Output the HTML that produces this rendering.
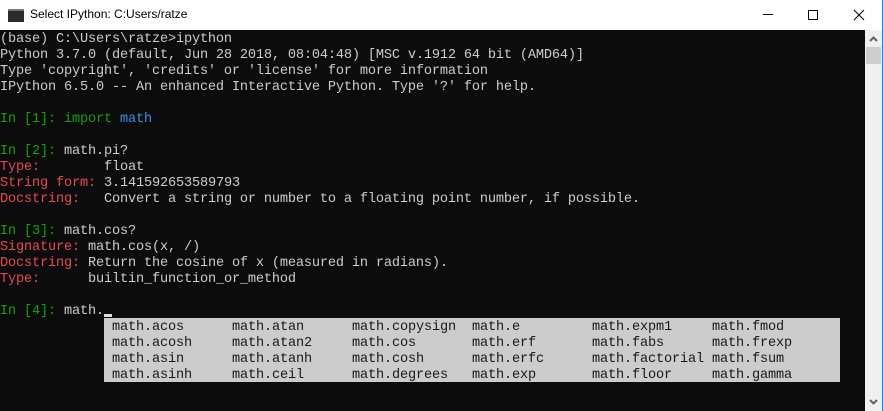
<!DOCTYPE html>
<html><head><style>
body{margin:0;width:883px;height:411px;overflow:hidden;background:#0c0c0c;position:relative;font-family:"Liberation Sans",sans-serif}
.title{position:absolute;left:0;top:0;width:883px;height:30px;background:#fff}
.title .t{position:absolute;left:30px;top:7px;font-size:12px;color:#000}
.ico{position:absolute;left:8px;top:9px;width:16px;height:11px;background:#2a2a2a;border-top:2px solid #777}
.con{position:absolute;left:0;top:32px;font-family:"Liberation Mono",monospace;font-size:13.6px;letter-spacing:-0.16px;line-height:16px;color:#cccccc;white-space:pre}
.g{color:#13a10e}.b{color:#3b8eea}.r{color:#e74856}
.pop{position:absolute;left:104px;top:318px;width:736px;height:64px;background:#cccccc}
.pop div{position:absolute;font-family:"Liberation Mono",monospace;font-size:13.6px;letter-spacing:-0.16px;line-height:16px;color:#1a1a1a;white-space:pre}
.sb{position:absolute;left:865px;top:30px;width:17px;height:381px;background:#f0f0f0}
.thumb{position:absolute;left:866px;top:47px;width:15px;height:17px;background:#cdcdcd}
.edge{position:absolute;left:882px;top:0;width:1px;height:411px;background:#2b7cd3}
.cur{position:absolute;left:104px;top:314px;width:8px;height:3px;background:#ddd}
</style></head><body>
<div class="title"><div class="ico"></div><div class="t">Select IPython: C:Users/ratze</div>
<svg style="position:absolute;left:760px;top:8px" width="120" height="16"><line x1="3" y1="6.5" x2="13" y2="6.5" stroke="#000"/><rect x="48.5" y="2.5" width="9" height="9" fill="none" stroke="#000"/><path d="M94 2L104 12M104 2L94 12" stroke="#000"/></svg>
</div>
<div class="con">(base) C:\Users\ratze&gt;ipython
Python 3.7.0 (default, Jun 28 2018, 08:04:48) [MSC v.1912 64 bit (AMD64)]
Type 'copyright', 'credits' or 'license' for more information
IPython 6.5.0 -- An enhanced Interactive Python. Type '?' for help.

<span class="g">In [1]: import</span> <span class="b">math</span>

<span class="g">In [2]:</span> math.pi?
<span class="r">Type:</span>        float
<span class="r">String form:</span> 3.141592653589793
<span class="r">Docstring:</span>   Convert a string or number to a floating point number, if possible.

<span class="g">In [3]:</span> math.cos?
<span class="r">Signature:</span> math.cos(x, /)
<span class="r">Docstring:</span> Return the cosine of x (measured in radians).
<span class="r">Type:</span>      builtin_function_or_method

<span class="g">In [4]:</span> math.</div>
<div class="cur"></div>
<div class="pop">
<div style="left:8px;top:2px">math.acos
math.acosh
math.asin
math.asinh</div>
<div style="left:128px;top:2px">math.atan
math.atan2
math.atanh
math.ceil</div>
<div style="left:248px;top:2px">math.copysign
math.cos
math.cosh
math.degrees</div>
<div style="left:368px;top:2px">math.e
math.erf
math.erfc
math.exp</div>
<div style="left:488px;top:2px">math.expm1
math.fabs
math.factorial
math.floor</div>
<div style="left:608px;top:2px">math.fmod
math.frexp
math.fsum
math.gamma</div>
</div>
<div class="sb"></div><div class="thumb"></div>
<svg style="position:absolute;left:866px;top:34px" width="15" height="10"><path d="M4 7L7.5 3.5L11 7" stroke="#606060" stroke-width="2" fill="none"/></svg>
<svg style="position:absolute;left:866px;top:397px" width="15" height="10"><path d="M4 3L7.5 6.5L11 3" stroke="#606060" stroke-width="2" fill="none"/></svg>
<div class="edge"></div>
</body></html>
